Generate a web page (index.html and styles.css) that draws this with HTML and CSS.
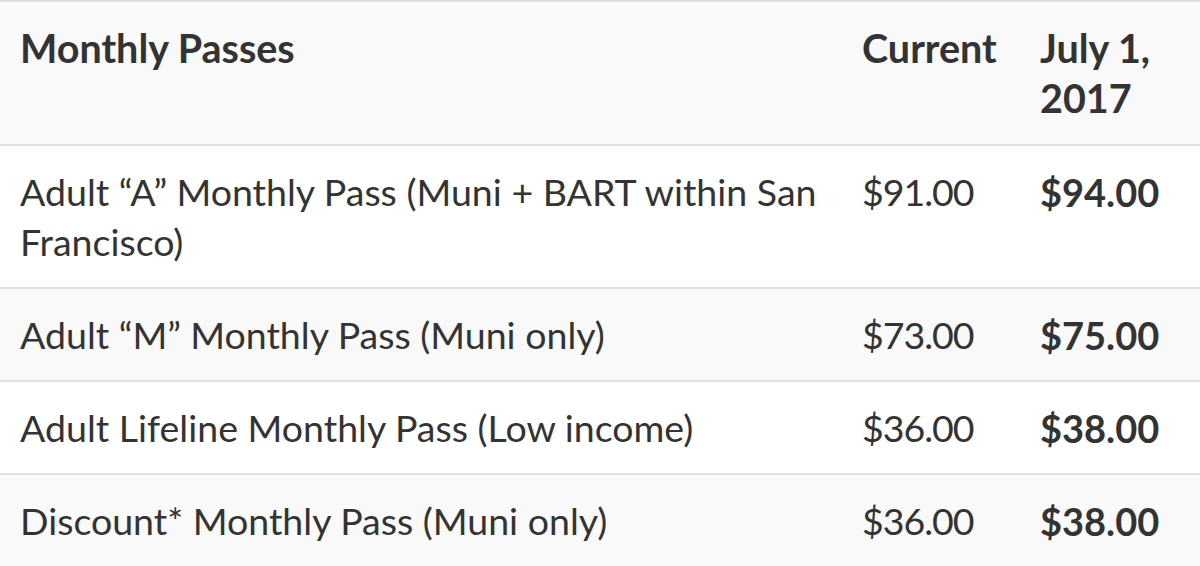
FILE: index.html
```html
<!DOCTYPE html>
<html lang="en">
<head>
<meta charset="utf-8">
<title>Monthly Passes</title>
<link rel="stylesheet" href="styles.css">
</head>
<body>
<table class="fares">
  <colgroup>
    <col class="c-name">
    <col class="c-cur">
    <col class="c-new">
  </colgroup>
  <thead>
    <tr>
      <th>Monthly Passes</th>
      <th>Current</th>
      <th>July 1, 2017</th>
    </tr>
  </thead>
  <tbody>
    <tr>
      <td>Adult “A” Monthly Pass (Muni + BART within San Francisco)</td>
      <td class="cur">$91.00</td>
      <td class="new">$94.00</td>
    </tr>
    <tr>
      <td>Adult “M” Monthly Pass (Muni only)</td>
      <td class="cur">$73.00</td>
      <td class="new">$75.00</td>
    </tr>
    <tr>
      <td>Adult Lifeline Monthly Pass (Low income)</td>
      <td class="cur">$36.00</td>
      <td class="new">$38.00</td>
    </tr>
    <tr>
      <td>Discount* Monthly Pass (Muni only)</td>
      <td class="cur">$36.00</td>
      <td class="new">$38.00</td>
    </tr>
  </tbody>
</table>
</body>
</html>
```

FILE: styles.css
```css
html, body {
  margin: 0;
  padding: 0;
  background: #ffffff;
}

body {
  font-family: "Lato", "Liberation Sans", sans-serif;
  color: #333333;
  font-size: 37.5px;
  line-height: 50px;
}

.fares {
  width: 1200px;
  table-layout: fixed;
  border-collapse: collapse;
  border-top: 2px solid #e0e0e0;
}

.c-name { width: 842px; }
.c-cur { width: 178px; }
.c-new { width: 180px; }

.fares th,
.fares td {
  padding: 21px 20px 20px 20px;
  text-align: left;
  vertical-align: top;
  border-bottom: 2px solid #e0e0e0;
}

.fares th {
  font-weight: 700;
  font-size: 39.5px;
  padding-top: 21px;
  padding-bottom: 21px;
}

.fares thead tr {
  background: #f9f9f9;
}

.fares tbody tr:nth-child(even) {
  background: #f9f9f9;
}

.fares td.cur {
  letter-spacing: -1px;
}

.fares td.new {
  font-weight: 700;
  font-size: 38px;
}
```
